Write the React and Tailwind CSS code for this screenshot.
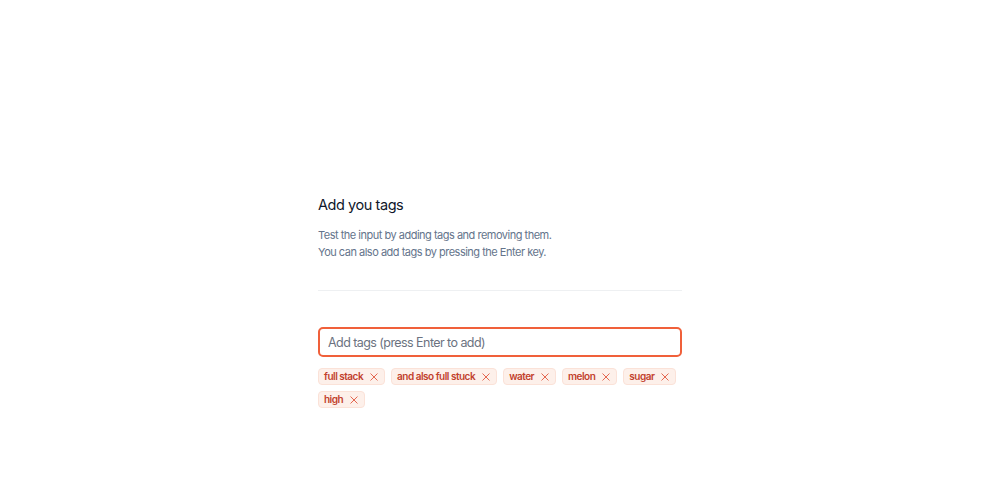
import React, { useState } from "react";

const XIcon = () => (
  <svg className="h-[8px] w-[8px]" viewBox="0 0 10 10" fill="none" stroke="currentColor" strokeWidth={1.1} strokeLinecap="round">
    <path d="M1 1l8 8M9 1L1 9" />
  </svg>
);

export default function App() {
  const [tags, setTags] = useState(["full stack", "and also full stuck", "water", "melon", "sugar", "high"]);
  const [value, setValue] = useState("");

  const handleKeyDown = (e) => {
    if (e.key === "Enter" && value.trim()) {
      setTags([...tags, value.trim()]);
      setValue("");
    }
  };

  return (
    <div className="min-h-screen bg-white flex justify-center pt-[194px]" style={{ fontFamily: "Inter, 'Noto Sans', sans-serif" }}>
      <div className="w-[364px]">
        <h2 className="text-[14.5px] leading-[22px] tracking-[-0.03em] text-[#0f172a]">Add you tags</h2>
        <p className="mt-[11px] text-[11px] leading-[17px] tracking-[-0.045em] text-[#64748b]">
          Test the input by adding tags and removing them.
          <br />
          You can also add tags by pressing the Enter key.
        </p>
        <div className="mt-[29px] h-px bg-[#eef0f2]" />
        <input
          type="text"
          value={value}
          onChange={(e) => setValue(e.target.value)}
          onKeyDown={handleKeyDown}
          placeholder="Add tags (press Enter to add)"
          className="mt-[36px] block w-full h-[30px] rounded-[5px] border-2 border-[#f0603a] px-[8px] text-[12.5px] tracking-[-0.045em] text-[#334155] placeholder:text-[#6b7280] outline-none"
        />
        <div className="mt-[11px] flex flex-wrap gap-x-[6px] gap-y-[6px]">
          {tags.map((tag, i) => (
            <span
              key={tag + i}
              className="inline-flex items-center gap-[7px] h-[17px] rounded-[4px] border border-[#fbe2d8] bg-[#fdf0ea] pl-[5px] pr-[6px] text-[10px] font-semibold tracking-[-0.05em] text-[#c2412d]"
            >
              {tag}
              <button onClick={() => setTags(tags.filter((_, j) => j !== i))} className="flex text-[#e0533a]">
                <XIcon />
              </button>
            </span>
          ))}
        </div>
      </div>
    </div>
  );
}
